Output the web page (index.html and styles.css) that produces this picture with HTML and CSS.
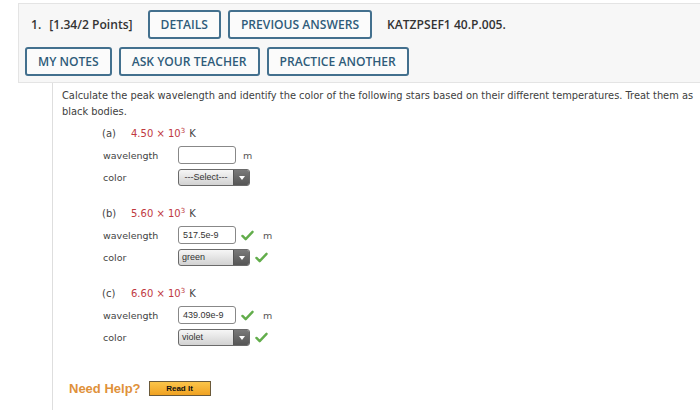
FILE: index.html
```html
<!DOCTYPE html>
<html>
<head>
<meta charset="utf-8">
<link rel="stylesheet" href="styles.css">
</head>
<body>
<div class="header">
  <div class="hrow">
    <span class="qnum">1.</span><span class="points">[1.34/2 Points]</span>
    <span class="btn btn-details">DETAILS</span>
    <span class="btn">PREVIOUS ANSWERS</span>
    <span class="code">KATZPSEF1 40.P.005.</span>
  </div>
  <div class="hrow">
    <span class="btn">MY NOTES</span>
    <span class="btn">ASK YOUR TEACHER</span>
    <span class="btn">PRACTICE ANOTHER</span>
  </div>
</div>
<div class="content">
  <p class="prompt">Calculate the peak wavelength and identify the color of the following stars based on their different temperatures. Treat them as black bodies.</p>

  <div class="part">
    <div class="part-head"><span class="plabel">(a)</span><span class="val">4.50 × 10<sup>3</sup></span><span class="kel">K</span></div>
    <div class="field"><span class="flabel">wavelength</span><span class="input"></span><span class="unit">m</span></div>
    <div class="field"><span class="flabel">color</span><span class="select centered"><span class="sel-text">---Select---</span><span class="sel-arrow"></span></span></div>
  </div>

  <div class="part">
    <div class="part-head"><span class="plabel">(b)</span><span class="val">5.60 × 10<sup>3</sup></span><span class="kel">K</span></div>
    <div class="field"><span class="flabel">wavelength</span><span class="input">517.5e-9</span><svg class="check" viewBox="0 0 14 12"><path d="M1.5 6.5 L5 10 L12.5 2" fill="none" stroke="#62ad4b" stroke-width="2.6" stroke-linecap="round" stroke-linejoin="round"/></svg><span class="unit unit-after">m</span></div>
    <div class="field"><span class="flabel">color</span><span class="select"><span class="sel-text">green</span><span class="sel-arrow"></span></span><svg class="check" viewBox="0 0 14 12"><path d="M1.5 6.5 L5 10 L12.5 2" fill="none" stroke="#62ad4b" stroke-width="2.6" stroke-linecap="round" stroke-linejoin="round"/></svg></div>
  </div>

  <div class="part">
    <div class="part-head"><span class="plabel">(c)</span><span class="val">6.60 × 10<sup>3</sup></span><span class="kel">K</span></div>
    <div class="field"><span class="flabel">wavelength</span><span class="input">439.09e-9</span><svg class="check" viewBox="0 0 14 12"><path d="M1.5 6.5 L5 10 L12.5 2" fill="none" stroke="#62ad4b" stroke-width="2.6" stroke-linecap="round" stroke-linejoin="round"/></svg><span class="unit unit-after">m</span></div>
    <div class="field"><span class="flabel">color</span><span class="select"><span class="sel-text">violet</span><span class="sel-arrow"></span></span><svg class="check" viewBox="0 0 14 12"><path d="M1.5 6.5 L5 10 L12.5 2" fill="none" stroke="#62ad4b" stroke-width="2.6" stroke-linecap="round" stroke-linejoin="round"/></svg></div>
  </div>

  <div class="help"><span class="need">Need Help?</span><span class="readit">Read It</span></div>
</div>
</body>
</html>
```
FILE: styles.css
```css
html, body {
  margin: 0;
  padding: 0;
  background: #ffffff;
  overflow: hidden;
}
body {
  font-family: "Open Sans", "DejaVu Sans", sans-serif;
  color: #333;
}
.header {
  margin: 3px 0 0 18px;
  width: 700px;
  box-sizing: border-box;
  background: #f7f7f7;
  border: 1px solid #e4e4e4;
  padding: 6px 7px 6px 6px;
  display: flex;
  flex-direction: column;
  gap: 8px;
}
.hrow {
  display: flex;
  align-items: center;
  gap: 7px;
  height: 29px;
}
.qnum {
  font-weight: 600;
  font-size: 12.1px;
  color: #333;
  margin-left: 6px;
  margin-right: 1px;
}
.points {
  font-weight: 600;
  font-size: 12.1px;
  color: #333;
  margin-right: 8px;
}
.btn {
  box-sizing: border-box;
  height: 29px;
  display: flex;
  align-items: center;
  padding: 0 11px;
  border: 2px solid #43708e;
  border-radius: 3px;
  background: #fbfbfb;
  color: #2f5b7a;
  font-weight: 600;
  font-size: 12.1px;
}
.code {
  font-weight: 600;
  font-size: 12.1px;
  color: #333;
  margin-left: 8px;
}
.content {
  margin-left: 52px;
  border-left: 1px solid #dedede;
  padding: 5px 0 12px 9px;
  font-family: "DejaVu Sans", Verdana, sans-serif;
  font-size: 10px;
  color: #3a3a3a;
}
.prompt {
  margin: 0 0 2px 0;
  line-height: 16px;
  font-size: 9.85px;
  color: #404040;
}
.part {
  margin-left: 40px;
  margin-bottom: 14px;
}
.part-head {
  height: 22px;
  display: flex;
  align-items: center;
  font-size: 10px;
}
.plabel {
  width: 29px;
  color: #444;
}
.val {
  color: #c0393f;
}
.val sup {
  font-size: 7px;
  vertical-align: 0;
  position: relative;
  top: -4px;
}
.kel {
  margin-left: 4px;
  color: #444;
}
.field {
  height: 22px;
  display: flex;
  align-items: center;
  font-size: 9.5px;
}
.flabel {
  width: 75px;
  padding-left: 1px;
  color: #444;
}
.input {
  box-sizing: border-box;
  width: 58px;
  height: 18px;
  border: 1px solid #888;
  border-radius: 3px;
  background: #fff;
  font-family: "Liberation Sans", Arial, sans-serif;
  font-size: 9px;
  color: #333;
  padding-left: 4px;
  display: flex;
  align-items: center;
}
.unit {
  margin-left: 7px;
  color: #555;
}
.unit-after {
  margin-left: 9px;
}
.check {
  width: 13px;
  height: 11px;
  margin-left: 5px;
}
.select {
  box-sizing: border-box;
  width: 72px;
  height: 17px;
  border: 1px solid #6a6a6a;
  border-radius: 3px;
  background: linear-gradient(#f6f6f6, #d2d2d2);
  display: flex;
  align-items: stretch;
  overflow: hidden;
  font-family: "Liberation Sans", Arial, sans-serif;
  font-size: 9px;
  color: #333;
}
.sel-text {
  flex: 1;
  display: flex;
  align-items: center;
  padding-left: 3px;
}
.select.centered .sel-text {
  justify-content: center;
  padding-left: 0;
}
.sel-arrow {
  width: 15px;
  background: linear-gradient(#7a7a7a, #555);
  border-left: 1px solid #555;
  position: relative;
}
.sel-arrow::after {
  content: "";
  position: absolute;
  left: 5px;
  top: 6px;
  border-left: 3px solid transparent;
  border-right: 3px solid transparent;
  border-top: 4px solid #fff;
}
.help {
  margin-top: 30px;
  margin-left: 7px;
  display: flex;
  align-items: center;
  height: 20px;
}
.need {
  font-family: "Liberation Sans", Arial, sans-serif;
  font-weight: bold;
  font-size: 13px;
  color: #e0913a;
  margin-right: 8px;
}
.readit {
  box-sizing: border-box;
  width: 62px;
  height: 15px;
  border: 1px solid #6b5a3a;
  background: linear-gradient(#fbc54a, #f0a223);
  font-family: "Liberation Sans", Arial, sans-serif;
  font-weight: bold;
  font-size: 8px;
  color: #111;
  display: flex;
  align-items: center;
  justify-content: center;
}
```
